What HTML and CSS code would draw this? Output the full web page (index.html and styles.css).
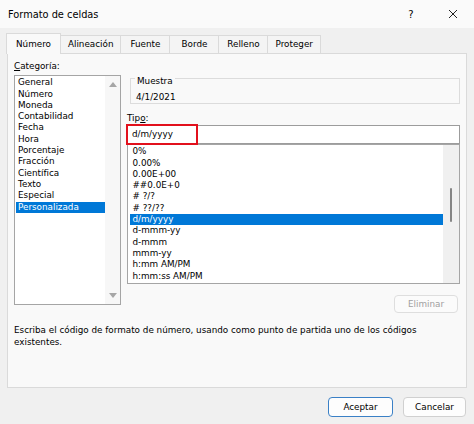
FILE: index.html
```html
<!DOCTYPE html>
<html lang="es">
<head>
<meta charset="utf-8">
<title>Formato de celdas</title>
<link rel="stylesheet" href="styles.css">
</head>
<body>
<div class="window">
  <div class="titlebar">
    <span class="title">Formato de celdas</span>
    <span class="help">?</span>
    <span class="close"><svg width="10" height="10" viewBox="0 0 10 10"><path d="M1 1 L9 9 M9 1 L1 9" stroke="#222" stroke-width="1" fill="none"/></svg></span>
  </div>
  <div class="tabs">
    <div class="tab active">Número</div>
    <div class="tab">Alineación</div>
    <div class="tab">Fuente</div>
    <div class="tab">Borde</div>
    <div class="tab">Relleno</div>
    <div class="tab">Proteger</div>
  </div>
  <div class="panel">
    <div class="main">
      <div class="left">
        <div class="label"><u>C</u>ategoría:</div>
        <div class="listbox cat">
          <ul class="items">
            <li>General</li>
            <li>Número</li>
            <li>Moneda</li>
            <li>Contabilidad</li>
            <li>Fecha</li>
            <li>Hora</li>
            <li>Porcentaje</li>
            <li>Fracción</li>
            <li>Científica</li>
            <li>Texto</li>
            <li>Especial</li>
            <li class="sel">Personalizada</li>
          </ul>
          <div class="vscroll arrows">
            <svg width="8" height="5" viewBox="0 0 8 5"><path d="M0 5 L4 0 L8 5 Z" fill="#a6a6a6"/></svg>
            <svg width="8" height="5" viewBox="0 0 8 5"><path d="M0 0 L8 0 L4 5 Z" fill="#a6a6a6"/></svg>
          </div>
        </div>
      </div>
      <div class="right">
        <div class="sample">
          <span class="legend">Muestra</span>
          <div class="sample-value">4/1/2021</div>
        </div>
        <div class="label tipo">Tip<u>o</u>:</div>
        <div class="typebox">d/m/yyyy<div class="highlight"></div></div>
        <div class="listbox fmt">
          <ul class="items">
            <li>0%</li>
            <li>0.00%</li>
            <li>0.00E+00</li>
            <li>##0.0E+0</li>
            <li># ?/?</li>
            <li># ??/??</li>
            <li class="sel">d/m/yyyy</li>
            <li>d-mmm-yy</li>
            <li>d-mmm</li>
            <li>mmm-yy</li>
            <li>h:mm AM/PM</li>
            <li>h:mm:ss AM/PM</li>
          </ul>
          <div class="vscroll track"><div class="thumb"></div></div>
        </div>
        <div class="actions"><button class="btn disabled" disabled>Eliminar</button></div>
      </div>
    </div>
    <p class="desc">Escriba el código de formato de número, usando como punto de partida uno de los códigos<br>existentes.</p>
  </div>
  <div class="footer">
    <button class="btn primary ok">Aceptar</button>
    <button class="btn cancel">Cancelar</button>
  </div>
</div>
</body>
</html>
```

FILE: styles.css
```css
html, body {
  margin: 0;
  padding: 0;
  background: #f0f0f0;
}

body {
  font-family: "DejaVu Sans", "Noto Sans", sans-serif;
  font-size: 8.8px;
  color: #000;
}

.window {
  width: 474px;
  height: 424px;
  display: flex;
  flex-direction: column;
  background: #f0f0f0;
  overflow: hidden;
}

.titlebar {
  flex: none;
  height: 28px;
  display: flex;
  align-items: center;
  padding-left: 8px;
  background: #fafafa;
}

.title {
  flex: 1;
  font-size: 9.8px;
}

.help {
  width: 20px;
  text-align: center;
  font-size: 10px;
}

.close {
  width: 20px;
  margin: 0 11px 0 22px;
  display: flex;
  justify-content: center;
}

.tabs {
  flex: none;
  height: 20px;
  padding: 5px 0 0 6px;
  display: flex;
  align-items: flex-end;
}

.tab {
  height: 18px;
  min-width: 49px;
  line-height: 17px;
  padding: 0 7px;
  text-align: center;
  box-sizing: border-box;
  border: 1px solid #dadada;
  border-bottom: none;
  border-left: none;
  background: #f4f4f4;
}

.tab.active {
  position: relative;
  z-index: 1;
  height: 21px;
  line-height: 21px;
  padding: 0 9px;
  margin-bottom: -1px;
  border-left: 1px solid #dadada;
  background: #f9f9f9;
}

.panel {
  flex: none;
  height: 335px;
  margin: 0 7px;
  box-sizing: border-box;
  border: 1px solid #dadada;
  background: #f9f9f9;
  padding: 6px 6px 0 6px;
}

.main {
  display: flex;
  gap: 6px;
}

.left {
  width: 107px;
  flex: none;
}

.right {
  width: 333px;
  flex: none;
}

.label {
  height: 12px;
  line-height: 12px;
  margin-bottom: 3px;
}

.listbox {
  display: flex;
  box-sizing: border-box;
  border: 1px solid #a5a5a5;
  background: #fff;
}

.listbox.cat {
  height: 230px;
}

.listbox.fmt {
  height: 140px;
}

.items {
  flex: 1;
  list-style: none;
  margin: 0;
  padding: 1.3px 0 0 0;
}

.items li {
  height: 11.3px;
  line-height: 11.3px;
  white-space: nowrap;
}

.cat .items li {
  margin-left: 1px;
  padding-left: 2px;
}

.fmt .items li {
  margin-left: 2px;
  padding-left: 2.5px;
}

.items li.sel {
  background: #0078d7;
  color: #fff;
}

.vscroll {
  flex: none;
  display: flex;
  flex-direction: column;
  align-items: center;
}

.arrows {
  width: 15px;
  background: #f7f7f7;
  justify-content: space-between;
  padding: 6px 0;
  box-sizing: border-box;
}

.track {
  width: 16px;
  background: #f0f0f0;
  padding-top: 43px;
  box-sizing: border-box;
}

.thumb {
  width: 2px;
  height: 34px;
  background: #858585;
  border-radius: 1px;
}

.sample {
  position: relative;
  margin: 18px 0 0 3px;
  height: 26px;
  box-sizing: border-box;
  border: 1px solid #dcdcdc;
}

.legend {
  position: absolute;
  top: -4px;
  left: 4px;
  padding: 0 2px;
  line-height: 12px;
  background: #f9f9f9;
}

.sample-value {
  padding: 12px 0 0 5px;
  line-height: 12px;
}

.label.tipo {
  margin: 8px 0 1px;
}

.typebox {
  position: relative;
  height: 19px;
  box-sizing: border-box;
  border: 1px solid #9c9c9c;
  background: #fff;
  line-height: 17px;
  padding-left: 4px;
}

.highlight {
  position: absolute;
  left: -2px;
  top: -2px;
  width: 72px;
  height: 21px;
  box-sizing: border-box;
  border: 2px solid #e2101c;
}

.actions {
  display: flex;
  justify-content: flex-end;
  margin-top: 11px;
  padding-right: 2px;
}

.btn {
  font-family: inherit;
  font-size: 8.8px;
  color: #000;
  margin: 0;
  padding: 0;
  box-sizing: border-box;
  background: #fdfdfd;
  border: 1px solid #d0d0d0;
  border-radius: 4px;
}

.btn.disabled {
  width: 64px;
  height: 18px;
  color: #a0a0a0;
  background: #fbfbfb;
  border-color: #dedede;
}

.desc {
  margin: 11px 0 0 0;
  line-height: 12px;
}

.footer {
  flex: none;
  display: flex;
  justify-content: flex-end;
  gap: 10px;
  padding: 9px 8px 0 0;
}

.ok {
  width: 65px;
  height: 20px;
  border-color: #3a80c6;
}

.cancel {
  width: 63px;
  height: 20px;
}
```
